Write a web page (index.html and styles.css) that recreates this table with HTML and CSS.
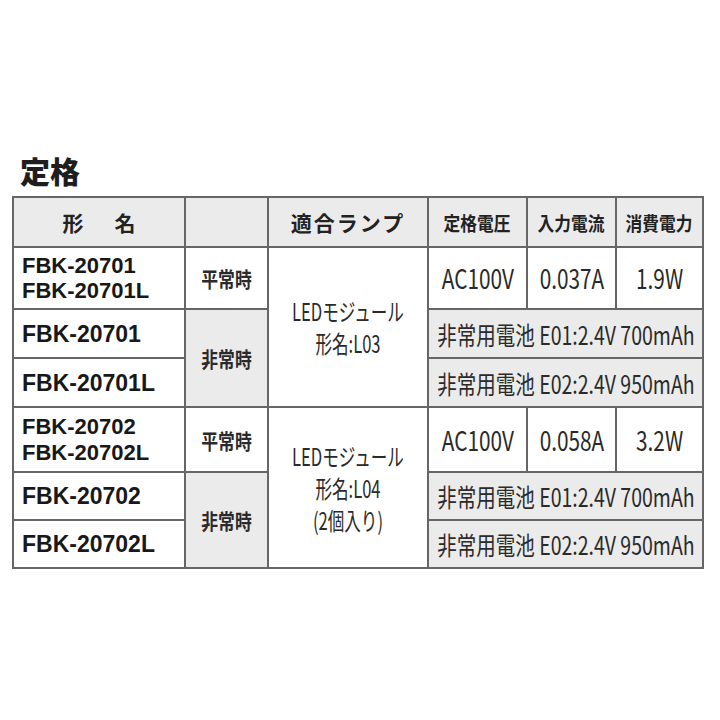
FILE: index.html
```html
<!DOCTYPE html>
<html lang="ja">
<head>
<meta charset="utf-8">
<link rel="stylesheet" href="styles.css">
</head>
<body>
<div class="page">
  <h1 class="title">定格</h1>
  <table class="spec">
    <colgroup>
      <col class="c-model">
      <col class="c-mode">
      <col class="c-lamp">
      <col class="c-volt">
      <col class="c-cur">
      <col class="c-pow">
    </colgroup>
    <thead>
      <tr class="r-head">
        <th class="h-model">形　名</th>
        <th></th>
        <th class="h-lamp">適合ランプ</th>
        <th><div class="fx"><span class="cond h-small">定格電圧</span></div></th>
        <th><div class="fx"><span class="cond h-small">入力電流</span></div></th>
        <th><div class="fx"><span class="cond h-small">消費電力</span></div></th>
      </tr>
    </thead>
    <tbody>
      <tr class="r-first">
        <td class="model two">FBK-20701<br>FBK-20701L</td>
        <td><div class="fx"><span class="cond mode">平常時</span></div></td>
        <td rowspan="3"><div class="fx"><span class="cond lamp">LEDモジュール<br>形名:L03</span></div></td>
        <td><div class="fx"><span class="cond val">AC100V</span></div></td>
        <td><div class="fx"><span class="cond val">0.037A</span></div></td>
        <td><div class="fx"><span class="cond val">1.9W</span></div></td>
      </tr>
      <tr class="r-single">
        <td class="model">FBK-20701</td>
        <td class="gray" rowspan="2"><div class="fx"><span class="cond mode">非常時</span></div></td>
        <td class="gray" colspan="3"><div class="fx"><span class="cond batt">非常用電池 E01:2.4V 700mAh</span></div></td>
      </tr>
      <tr class="r-single">
        <td class="model">FBK-20701L</td>
        <td class="gray" colspan="3"><div class="fx"><span class="cond batt">非常用電池 E02:2.4V 950mAh</span></div></td>
      </tr>
      <tr class="r-second">
        <td class="model two">FBK-20702<br>FBK-20702L</td>
        <td><div class="fx"><span class="cond mode">平常時</span></div></td>
        <td rowspan="3"><div class="fx"><span class="cond lamp">LEDモジュール<br>形名:L04<br>(2個入り)</span></div></td>
        <td><div class="fx"><span class="cond val">AC100V</span></div></td>
        <td><div class="fx"><span class="cond val">0.058A</span></div></td>
        <td><div class="fx"><span class="cond val">3.2W</span></div></td>
      </tr>
      <tr class="r-single2">
        <td class="model">FBK-20702</td>
        <td class="gray" rowspan="2"><div class="fx"><span class="cond mode">非常時</span></div></td>
        <td class="gray" colspan="3"><div class="fx"><span class="cond batt">非常用電池 E01:2.4V 700mAh</span></div></td>
      </tr>
      <tr class="r-single2">
        <td class="model">FBK-20702L</td>
        <td class="gray" colspan="3"><div class="fx"><span class="cond batt">非常用電池 E02:2.4V 950mAh</span></div></td>
      </tr>
    </tbody>
  </table>
</div>
</body>
</html>
```
FILE: styles.css
```css
html, body {
  margin: 0;
  padding: 0;
  background: #ffffff;
}
body {
  width: 720px;
  height: 720px;
  color: #222222;
  font-family: "Noto Sans CJK JP", "Noto Sans", sans-serif;
}
.page {
  padding: 153px 0 0 12px;
}
.title {
  margin: 0 0 9px 8px;
  font-size: 30px;
  line-height: 34px;
  font-weight: 900;
  color: #1e1e1e;
}
.spec {
  border-collapse: collapse;
  table-layout: fixed;
  width: 692px;
  border: 2px solid #555555;
}
.spec th, .spec td {
  border: 2px solid #666666;
  padding: 0;
  text-align: center;
  vertical-align: middle;
  overflow: visible;
}
.c-model { width: 172px; }
.c-mode { width: 83px; }
.c-lamp { width: 160px; }
.c-volt { width: 99px; }
.c-cur { width: 89px; }
.c-pow { width: 87px; }

.r-head { height: 50px; }
.r-first { height: 62px; }
.r-single { height: 49px; }
.r-second { height: 65px; }
.r-single2 { height: 48px; }

.r-head th {
  background: #ebebeb;
  font-weight: 700;
  color: #222;
}
.gray {
  background: #ebebeb;
}

.fx {
  display: flex;
  justify-content: center;
  align-items: center;
}
.cond {
  display: inline-block;
  white-space: nowrap;
  transform-origin: center center;
  flex: none;
}

.h-model {
  font-size: 21px;
  letter-spacing: 5px;
  padding-left: 5px !important;
}
.h-lamp {
  font-size: 21px;
  letter-spacing: 2px;
}
.h-small {
  font-size: 19px;
  font-weight: 700;
  transform: scaleX(0.88);
}

.model {
  text-align: left !important;
  padding-left: 8px !important;
  font-family: "Liberation Sans", Arial, sans-serif;
  font-weight: 700;
  font-size: 23px;
  line-height: 26px;
  color: #181818;
}
.model.two {
  font-size: 22px;
  line-height: 25.5px;
}
.mode {
  font-size: 21px;
  font-weight: 700;
  color: #2a2a2a;
  transform: scaleX(0.8);
}
.lamp {
  font-size: 24px;
  line-height: 32px;
  color: #2a2a2a;
  transform: scaleX(0.69);
}
.val {
  font-size: 27px;
  line-height: 32px;
  color: #2a2a2a;
  transform: scaleX(0.77);
}
.batt {
  font-size: 25px;
  line-height: 32px;
  color: #2a2a2a;
  transform: scaleX(0.78);
}
```
